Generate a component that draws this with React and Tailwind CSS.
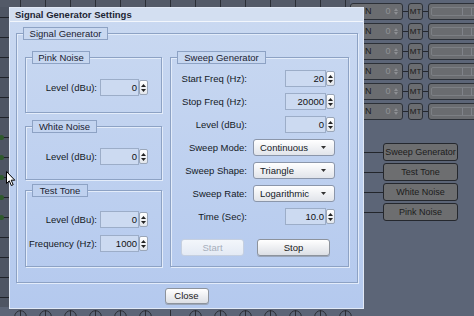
import React from "react";

function Spinner() {
  return (
    <div className="my-[1px] flex w-[9px] flex-col items-center justify-center gap-[2px] rounded-[2px] border border-[#9aa6b8] bg-gradient-to-b from-white to-[#e2e6ec]">
      <svg width="5" height="3" viewBox="0 0 5 3"><path d="M0 3 L2.5 0 L5 3Z" fill="#222" /></svg>
      <svg width="5" height="3" viewBox="0 0 5 3"><path d="M0 0 L2.5 3 L5 0Z" fill="#222" /></svg>
    </div>
  );
}

function NumInput({ value, w }) {
  return (
    <div className="flex h-[17px]">
      <div className={`flex h-full items-center justify-end border border-[#9cadc8] bg-[#ccdaf1] pr-[1px] leading-none text-[#111] ${w}`}>
        {value}
      </div>
      <Spinner />
    </div>
  );
}

function Legend({ title, w, bg }) {
  return (
    <div className={`-mt-[7px] ml-[6px] flex h-[13px] items-center justify-center border border-[#8da2c4] leading-none text-[#1b2230] ${w} ${bg}`}>
      {title}
    </div>
  );
}

const groupCls = "border border-[#8da2c4] shadow-[inset_1px_1px_0_#e3ecfa,1px_1px_0_#e3ecfa]";

function LeftRow({ label, value }) {
  return (
    <div className="flex h-[17px] items-center">
      <div className="w-[71px] text-right leading-none">{label}</div>
      <div className="ml-[3px]">
        <NumInput value={value} w="w-[39px]" />
      </div>
    </div>
  );
}

function SweepNum({ label, value }) {
  return (
    <div className="flex h-[17px] items-center">
      <div className="w-[76px] text-right leading-none">{label}</div>
      <div className="ml-[6px] flex w-[82px] justify-end">
        <NumInput value={value} w="w-[41px]" />
      </div>
    </div>
  );
}

function SweepSelect({ label, value }) {
  return (
    <div className="flex h-[17px] items-center">
      <div className="w-[76px] text-right leading-none">{label}</div>
      <div className="ml-[6px] flex h-[17px] w-[82px] items-center justify-between rounded-[3px] border border-[#8b96aa] bg-gradient-to-b from-white to-[#e1e4ea] pl-[6px] pr-[8px] leading-none">
        <span>{value}</span>
        <svg width="5" height="3" viewBox="0 0 5 3"><path d="M0 0H5L2.5 3Z" fill="#333" /></svg>
      </div>
    </div>
  );
}

function ChannelRow() {
  return (
    <div className="flex h-[17px] items-center">
      <div className="flex h-full w-[53px] items-center rounded-[3px] border border-[#2c3037] bg-[#6a6c70] pl-[14px] text-[9px] leading-none">
        <span className="text-[#1a1a1a]">N</span>
        <span className="ml-[14px] text-[#909296]">0</span>
        <div className="ml-[3px] flex flex-col gap-[1px]">
          <svg width="4" height="3" viewBox="0 0 4 3"><path d="M0 3L2 0L4 3Z" fill="#8d8f93" /></svg>
          <svg width="4" height="3" viewBox="0 0 4 3"><path d="M0 0L2 3L4 0Z" fill="#8d8f93" /></svg>
        </div>
      </div>
      <div className="h-px w-[5px] bg-[#23262c]" />
      <div className="flex h-full w-[15px] items-center justify-center rounded-[3px] border border-[#2c3037] bg-[#6a6c70] text-[8px] leading-none text-[#1a1a1a]">
        MT
      </div>
      <div className="h-px w-[5px] bg-[#23262c]" />
      <div className="flex h-full w-[60px] shrink-0 items-center rounded-[3px] border border-[#2c3037] bg-[#6a6c70] px-[2px]">
        <div className="relative flex h-[9px] w-full items-center rounded-[2px] border border-[#7c7f84]">
          <div className="ml-[30px] h-[7px] w-px bg-[#80838a]" />
          <div className="ml-[8px] h-[7px] w-px bg-[#80838a]" />
        </div>
      </div>
    </div>
  );
}

function SourceBox({ label }) {
  return (
    <div className="flex h-[18px] items-center">
      <div className="h-px w-[33px] bg-[#23262c]" />
      <div className="flex h-full w-[75px] items-center justify-center rounded-[3px] border border-[#25282e] bg-[#6d6e70] text-[9px] leading-none text-[#1c1c1c]">
        {label}
      </div>
    </div>
  );
}

function Knob() {
  return (
    <svg width="13" height="13" viewBox="0 0 13 13">
      <circle cx="6.5" cy="6.5" r="5.8" fill="none" stroke="#2a2d33" strokeWidth="1" />
      <path d="M6.5 0V13" stroke="#2a2d33" strokeWidth="1" />
    </svg>
  );
}

export default function App() {
  const ticks = Array.from({ length: 14 });
  const leftMarks = Array.from({ length: 15 });
  const knobs = Array.from({ length: 14 });
  return (
    <div className="relative h-[316px] w-[474px] overflow-hidden bg-[#5c6577] font-['Liberation_Sans',Arial,sans-serif] text-[9.5px] text-[#141a26]">
      {/* background canvas */}
      <div className="flex h-full">
        <div className="flex w-[350px] shrink-0 flex-col">
          <div className="flex h-[7px] gap-[24px] bg-[#535a68] pl-[20px]">
            {ticks.map((_, i) => (
              <div key={i} className="h-full w-px bg-[#2a2e36]" />
            ))}
          </div>
          <div className="flex flex-1">
            <div className="flex w-[9px] flex-col bg-[#4e5563]">
              {leftMarks.map((_, i) => (
                <div key={i} className="relative flex h-[20px] items-center">
                  <div className="h-px w-full bg-[#1f2228]" />
                  {i >= 6 && i <= 10 ? (
                    <div className="absolute left-[-1px] h-[5px] w-[5px] rounded-full bg-[#2f5a2c]" />
                  ) : null}
                </div>
              ))}
            </div>
          </div>
          <div className="flex h-[9px] pl-[8px] pt-[3px]">
            {knobs.map((_, i) => (
              <div key={i} className="flex w-[25px] shrink-0 justify-center">
                {i === 6 ? <div className="h-[13px] w-px bg-[#2a2d33]" /> : <Knob />}
              </div>
            ))}
          </div>
        </div>
        <div className="flex flex-col pt-[3px]">
          <div className="flex flex-col gap-[3px]">
            {Array.from({ length: 6 }).map((_, i) => (
              <ChannelRow key={i} />
            ))}
          </div>
          <div className="mt-[23px] flex flex-col gap-[2px]">
            <SourceBox label="Sweep Generator" />
            <SourceBox label="Test Tone" />
            <SourceBox label="White Noise" />
            <SourceBox label="Pink Noise" />
          </div>
        </div>
      </div>

      {/* dialog */}
      <div className="absolute left-[9px] top-[7px] flex h-[302px] w-[355px] flex-col border border-[#e1e9f6] bg-gradient-to-b from-[#cad9f1] to-[#b4c9ee]">
        <div className="flex h-[13px] items-center bg-[#d3dff1] pl-[5px] font-bold leading-none text-[#1d2533]">
          Signal Generator Settings
        </div>
        <div className="h-px bg-[#f2f6fc]" />
        <div className="flex flex-1 flex-col">
          <div className={`ml-[6px] mr-[5px] mt-[11px] pb-[15px] ${groupCls}`}>
            <Legend title="Signal Generator" w="w-[85px]" bg="bg-[#c9d8f0]" />
            <div className="mt-[17px] flex pl-[8px]">
              <div className="flex w-[137px] flex-col">
                <div className={`pb-[16px] ${groupCls}`}>
                  <Legend title="Pink Noise" w="w-[58px]" bg="bg-[#c7d7f0]" />
                  <div className="mt-[15px]">
                    <LeftRow label="Level (dBu):" value="0" />
                  </div>
                </div>
                <div className={`mt-[13px] pb-[14px] ${groupCls}`}>
                  <Legend title="White Noise" w="w-[65px]" bg="bg-[#c3d4f0]" />
                  <div className="mt-[15px]">
                    <LeftRow label="Level (dBu):" value="0" />
                  </div>
                </div>
                <div className={`mt-[10px] pb-[14px] ${groupCls}`}>
                  <Legend title="Test Tone" w="w-[56px]" bg="bg-[#bfd1ef]" />
                  <div className="mt-[14px] flex flex-col gap-[7px]">
                    <LeftRow label="Level (dBu):" value="0" />
                    <LeftRow label="Frequency (Hz):" value="1000" />
                  </div>
                </div>
              </div>
              <div className={`ml-[8px] w-[179px] pb-[10px] ${groupCls}`}>
                <Legend title="Sweep Generator" w="w-[89px]" bg="bg-[#c7d7f0]" />
                <div className="mt-[6px] flex flex-col gap-[6px]">
                  <SweepNum label="Start Freq (Hz):" value="20" />
                  <SweepNum label="Stop Freq (Hz):" value="20000" />
                  <SweepNum label="Level (dBu):" value="0" />
                  <SweepSelect label="Sweep Mode:" value="Continuous" />
                  <SweepSelect label="Sweep Shape:" value="Triangle" />
                  <SweepSelect label="Sweep Rate:" value="Logarithmic" />
                  <SweepNum label="Time (Sec):" value="10.0" />
                </div>
                <div className="ml-[10px] mt-[14px] flex gap-[13px]">
                  <div className="flex h-[17px] w-[63px] items-center justify-center rounded-[3px] border border-[#c6d0e0] bg-gradient-to-b from-[#f3f6fb] to-[#e4eaf4] leading-none text-[#a6aebb]">
                    Start
                  </div>
                  <div className="flex h-[17px] w-[73px] items-center justify-center rounded-[3px] border border-[#8d939c] bg-gradient-to-b from-white to-[#dcdfe5] leading-none text-[#1a1a1a] shadow-[0_1px_0_#9aa6ba]">
                    Stop
                  </div>
                </div>
              </div>
            </div>
          </div>
          <div className="mt-[5px] flex justify-center">
            <div className="flex h-[16px] w-[44px] items-center justify-center rounded-[3px] border border-[#8d939c] bg-gradient-to-b from-white to-[#dcdfe5] leading-none text-[#1a1a1a] shadow-[0_1px_0_#9aa6ba]">
              Close
            </div>
          </div>
        </div>
      </div>

      {/* mouse cursor */}
      <svg className="absolute left-[6px] top-[171px]" width="10" height="16" viewBox="0 0 10 16">
        <path d="M0.5 0.5 L0.5 12.5 L3.3 9.8 L5.3 14.5 L7.2 13.7 L5.2 9.2 L8.8 9.2 Z" fill="#ffffff" stroke="#000000" strokeWidth="1" strokeLinejoin="round" />
      </svg>
    </div>
  );
}
